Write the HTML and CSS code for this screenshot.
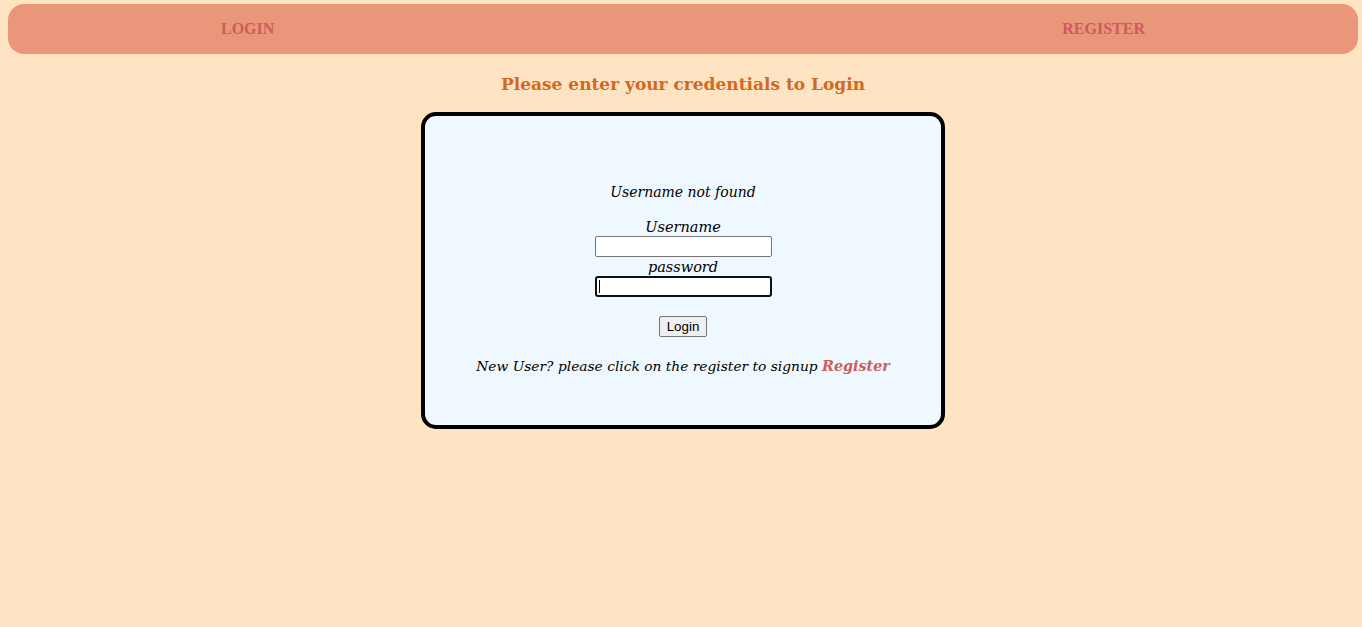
FILE: index.html
```html
<!DOCTYPE html>
<html>
<head>
<meta charset="utf-8">
<title>Login</title>
<link rel="stylesheet" href="styles.css">
</head>
<body>
<nav class="navbar">
  <a class="nav-link" href="#">LOGIN</a>
  <a class="nav-link" href="#">REGISTER</a>
</nav>
<h3 class="page-title">Please enter your credentials to Login</h3>
<div class="card">
  <p class="error">Username not found</p>
  <form class="login-form">
    <label class="field-label" for="username">Username</label>
    <input class="field" id="username" type="text">
    <label class="field-label" for="password">password</label>
    <span class="field-wrap">
      <input class="field field-focused" id="password" type="password">
      <span class="caret"></span>
    </span>
    <button class="btn" type="button">Login</button>
  </form>
  <p class="signup">New User? please click on the register to signup <a class="signup-link" href="#">Register</a></p>
</div>
</body>
</html>
```

FILE: styles.css
```css
html, body {
  background: #ffe4c4;
}
body {
  margin: 4px 4px 0 8px;
  font-family: "DejaVu Serif", "Liberation Serif", serif;
}
.navbar {
  height: 50px;
  background: #e9967a;
  border-radius: 16px;
  display: flex;
  align-items: center;
  justify-content: space-between;
  padding: 0 213px;
}
.nav-link {
  font-family: "Liberation Serif", serif;
  font-weight: bold;
  font-size: 16px;
  color: #cd5c5c;
  text-decoration: none;
  line-height: 18px;
}
.page-title {
  margin: 20px 0 0 0;
  text-align: center;
  font-size: 17px;
  line-height: 20px;
  font-weight: bold;
  color: #d2691e;
}
.card {
  width: 516px;
  box-sizing: content-box;
  margin: 18px 0 0 413px;
  border: 4px solid #000;
  border-radius: 15px;
  background: #f0f8ff;
  padding: 67px 0 50px 0;
  font-style: italic;
  font-size: 14px;
  text-align: center;
}
.error {
  margin: 0;
  line-height: 18px;
}
.login-form {
  margin-top: 16px;
  display: flex;
  flex-direction: column;
  align-items: center;
}
.field-label {
  line-height: 20px;
  height: 19px;
  font-size: 14.5px;
}
.field {
  width: 177px;
  height: 21px;
  box-sizing: border-box;
  margin: 0;
  border: 1px solid #767676;
  border-radius: 2px;
  background: #fff;
  padding: 1px 2px;
  font-family: "Liberation Sans", sans-serif;
  font-size: 13.33px;
}
.field-wrap {
  position: relative;
  display: block;
  width: 177px;
  height: 21px;
}
.field-focused {
  border: 2px solid #101010;
  border-radius: 3px;
  outline: none;
}
.caret {
  position: absolute;
  left: 4px;
  top: 4px;
  width: 1px;
  height: 13px;
  background: #000;
}
.btn {
  margin-top: 19px;
  height: 21px;
  width: 48px;
  padding: 0;
  font-family: "Liberation Sans", sans-serif;
  font-size: 13.33px;
  color: #000;
  background: #efefef;
  border: 1px solid #767676;
  border-radius: 2px;
}
.signup {
  margin: 20px 0 0 0;
  line-height: 18px;
  font-size: 13.8px;
}
.signup-link {
  color: #cd5c5c;
  font-weight: bold;
  text-decoration: none;
  font-size: 14.3px;
}
```
